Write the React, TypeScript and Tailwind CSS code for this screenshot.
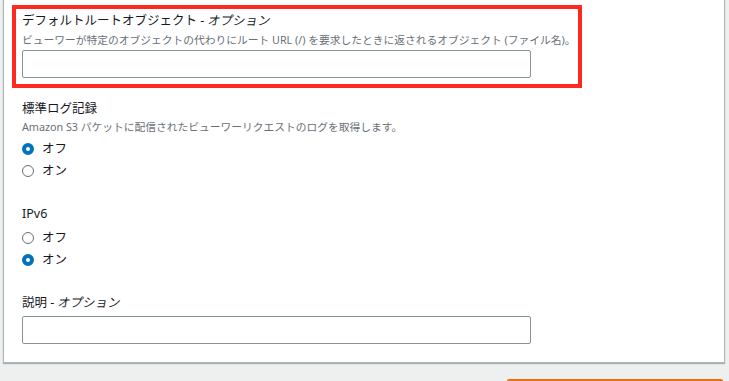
import React from 'react';

const font = { fontFamily: '"Noto Sans", "Noto Sans CJK JP", sans-serif' };

function Radio({ label, checked }: { label: string; checked?: boolean }) {
  return (
    <label className="flex items-center h-[22px] text-[12.5px] text-[#16191f]">
      <span
        className={
          checked
            ? 'w-3 h-3 rounded-full border-[4px] border-[#0073bb] bg-white'
            : 'w-3 h-3 rounded-full border border-[#687078] bg-white'
        }
      />
      <span className="ml-[8px] leading-none">{label}</span>
    </label>
  );
}

function Optional() {
  return <span className="inline-block -skew-x-[10deg]">オプション</span>;
}

export default function App() {
  return (
    <div className="w-[729px] h-[381px] overflow-hidden bg-[#eef0f0]" style={font}>
      <div className="ml-[3px] w-[722px] h-[363px] bg-white border-x border-b border-[#aab7b8] shadow-[0_1px_1px_rgba(0,28,36,0.3)] pl-2 pt-[5px]">
        {/* annotated field */}
        <div className="w-[570px] border-[4px] border-[#ff2a1f] pl-[6px] pt-[3px] pb-[6px]">
          <div className="text-[12.5px] leading-[18px] text-[#16191f]">
            デフォルトルートオブジェクト - <Optional />
          </div>
          <div className="text-[10.75px] leading-[16px] text-[#687078] mt-[2px] whitespace-nowrap">
            ビューワーが特定のオブジェクトの代わりにルート URL (/) を要求したときに返されるオブジェクト (ファイル名)。
          </div>
          <input className="mt-[2px] block w-[509px] h-[28px] border border-[#879596] rounded-[2px] outline-none" />
        </div>

        <div className="ml-[10px] mt-[12px]">
          <div className="text-[12.5px] leading-[18px] text-[#16191f]">標準ログ記録</div>
          <div className="text-[10.75px] leading-[16px] text-[#687078] mt-[1px] whitespace-nowrap">
            Amazon S3 パケットに配信されたビューワーリクエストのログを取得します。
          </div>
          <div className="mt-[3px]">
            <Radio label="オフ" checked />
            <Radio label="オン" />
          </div>

          <div className="mt-[23px] text-[12.5px] leading-[18px] text-[#16191f]">IPv6</div>
          <div className="mt-[4px]">
            <Radio label="オフ" />
            <Radio label="オン" checked />
          </div>

          <div className="mt-[23px] text-[12.5px] leading-[18px] text-[#16191f]">
            説明 - <Optional />
          </div>
          <input className="mt-[4px] block w-[509px] h-[28px] border border-[#879596] rounded-[2px] outline-none" />
        </div>
      </div>
      <div className="flex justify-end pr-[6px] mt-[16px]">
        <button className="w-[216px] h-8 bg-[#ec7211] rounded-[2px]" />
      </div>
    </div>
  );
}
